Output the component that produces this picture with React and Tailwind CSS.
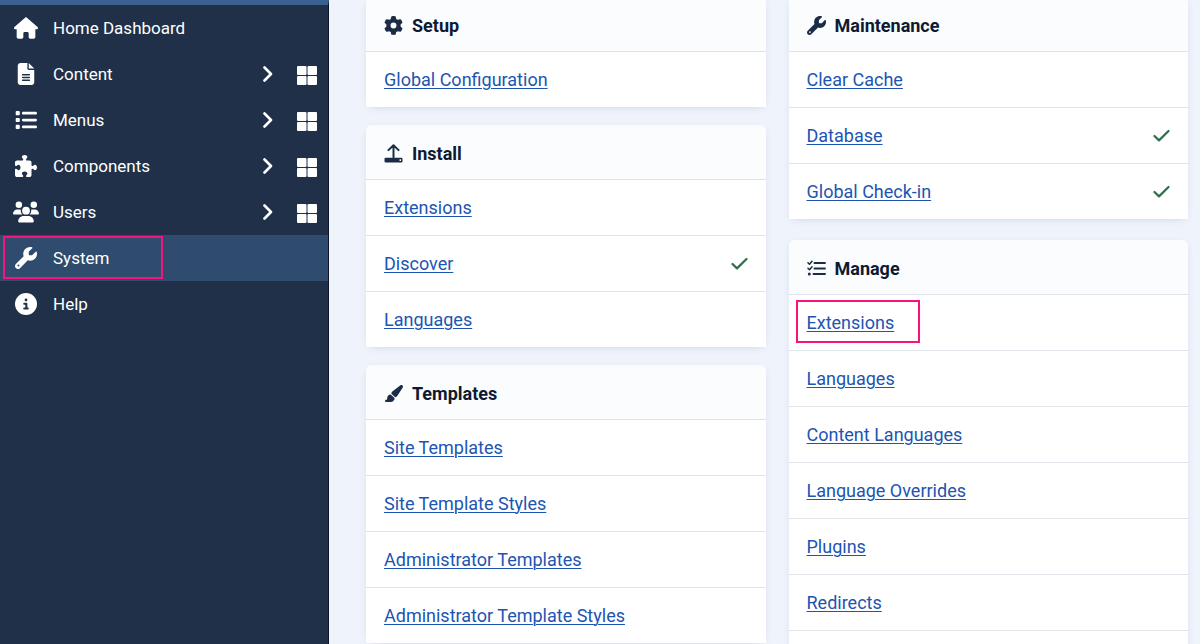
// src/App.jsx
// System dashboard: sidebar menu and link panels

import {
  FaHouse,
  FaFileLines,
  FaList,
  FaPuzzlePiece,
  FaUsers,
  FaWrench,
  FaCircleInfo,
  FaGear,
  FaPaintbrush,
} from 'react-icons/fa6';

const UploadIcon = ({ className }) => (
  <svg viewBox="0 0 18 18" className={className} fill="none" stroke="currentColor" aria-hidden="true">
    <path d="M9 12.5V1.6M4.2 5.8 9 1.2l4.8 4.6" strokeWidth="1.9" strokeLinecap="round" strokeLinejoin="round" />
    <path
      d="M1.5 13h15a1 1 0 0 1 1 1v2.6a1 1 0 0 1-1 1h-15a1 1 0 0 1-1-1V14a1 1 0 0 1 1-1Zm13.2 1.5v1.7h1.4v-1.7Z"
      fill="currentColor"
      fillRule="evenodd"
      stroke="none"
    />
  </svg>
);

const ChecklistIcon = ({ className }) => (
  <svg viewBox="0 0 19 19" className={className} fill="none" stroke="currentColor" aria-hidden="true">
    <path d="M7.5 4H18M7.5 9.5H18M6.5 15H18" strokeWidth="1.9" strokeLinecap="round" />
    <path d="m1 3.8 1.5 1.5L5 2.3M1 9.3l1.5 1.5L5 7.8" strokeWidth="1.5" strokeLinecap="round" strokeLinejoin="round" />
    <circle cx="2.3" cy="15" r="1.5" fill="currentColor" stroke="none" />
  </svg>
);

const GridIcon = () => (
  <svg viewBox="0 0 20 19" className="h-[19px] w-5" fill="currentColor" aria-hidden="true">
    <rect width="9.5" height="9" rx="1" />
    <rect x="10.5" width="9.5" height="9" rx="1" />
    <rect y="10" width="9.5" height="9" rx="1" />
    <rect x="10.5" y="10" width="9.5" height="9" rx="1" />
  </svg>
);

const CheckIcon = () => (
  <svg viewBox="0 0 18 14" className="h-[14px] w-[18px] shrink-0" fill="none" stroke="#2f6f4a" role="img" aria-label="Up to date">
    <path d="M2.5 7 7 11.4 16.5 2" strokeWidth="2.2" strokeLinecap="round" strokeLinejoin="round" />
  </svg>
);

const menu = [
  { label: 'Home Dashboard', icon: FaHouse, size: 'size-6' },
  { label: 'Content', icon: FaFileLines, size: 'size-[22px]', parent: true },
  { label: 'Menus', icon: FaList, size: 'size-[22px]', parent: true },
  { label: 'Components', icon: FaPuzzlePiece, size: 'size-[22px]', parent: true },
  { label: 'Users', icon: FaUsers, size: 'size-[26px]', parent: true },
  { label: 'System', icon: FaWrench, size: 'size-[22px]', active: true },
  { label: 'Help', icon: FaCircleInfo, size: 'size-[22px]' },
];

const leftPanels = [
  { title: 'Setup', icon: FaGear, links: [{ label: 'Global Configuration' }] },
  {
    title: 'Install',
    icon: UploadIcon,
    links: [{ label: 'Extensions' }, { label: 'Discover', ok: true }, { label: 'Languages' }],
  },
  {
    title: 'Templates',
    icon: FaPaintbrush,
    links: [
      { label: 'Site Templates' },
      { label: 'Site Template Styles' },
      { label: 'Administrator Templates' },
      { label: 'Administrator Template Styles' },
    ],
  },
];

const rightPanels = [
  {
    title: 'Maintenance',
    icon: FaWrench,
    links: [{ label: 'Clear Cache' }, { label: 'Database', ok: true }, { label: 'Global Check-in', ok: true }],
  },
  {
    title: 'Manage',
    icon: ChecklistIcon,
    more: true,
    links: [
      { label: 'Extensions', marked: true },
      { label: 'Languages' },
      { label: 'Content Languages' },
      { label: 'Language Overrides' },
      { label: 'Plugins' },
      { label: 'Redirects' },
    ],
  },
];

const MenuItem = ({ label, icon: Icon, size, parent, active }) => (
  <li className={`relative flex h-[46px] items-center pr-[11px] ${active ? 'bg-[#2f4b6d]' : ''}`}>
    <a href="#" className="flex flex-1 items-center text-white">
      <span className="mr-px flex w-[52px] justify-center">
        <Icon className={size} aria-hidden="true" />
      </span>
      {label}
    </a>
    {parent && (
      <>
        <button type="button" aria-label={`Expand ${label}`} className="mr-6 text-white">
          <svg viewBox="0 0 10 18" className="h-[18px] w-[10px]" fill="none" stroke="currentColor">
            <path d="M1.5 2.5 8 9l-6.5 6.5" strokeWidth="2.6" strokeLinecap="round" strokeLinejoin="round" />
          </svg>
        </button>
        <a href="#" aria-label={`${label} dashboard`} className="pt-[3px] text-white">
          <GridIcon />
        </a>
      </>
    )}
    {active && <span className="absolute top-px left-[3px] h-[43px] w-40 border-2 border-[#f8127d]" />}
  </li>
);

const Panel = ({ title, icon: Icon, links, more }) => (
  <section className="rounded-t-md bg-white shadow-[0_2px_10px_-4px_rgba(30,60,120,0.25)]">
    <h2 className="flex h-[55px] items-center gap-[9px] rounded-t-md border-b border-[#dfe3ea] bg-[#fbfcfe] px-[18px] pt-[3px] font-bold text-[#0e1a33]">
      <Icon className="size-[19px] text-[#1b2c47]" aria-hidden="true" />
      {title}
    </h2>
    <ul>
      {links.map(({ label, ok, marked }, i) => (
        <li
          key={label}
          className={`relative flex items-center justify-between px-[18px] ${
            i < links.length - 1 || more ? 'h-14 border-b border-[#dfe3ea]' : 'h-[55px]'
          }`}
        >
          <a href="#" className="text-[#1c55b2] underline decoration-1 underline-offset-2">
            {label}
          </a>
          {ok && <CheckIcon />}
          {marked && <span className="absolute top-[5px] left-[7px] h-[43px] w-[124px] border-2 border-[#f8127d]" />}
        </li>
      ))}
      {more && <li className="h-14" />}
    </ul>
  </section>
);

export default function App() {
  return (
    <div className="flex h-screen overflow-hidden bg-[#eff3fb] font-['Roboto',sans-serif] text-lg">
      <nav className="w-[329px] shrink-0 border-t-[5px] border-r border-t-[#3b6190] border-r-[#0c1626] bg-[#1f3048] text-[17px]">
        <ul>
          {menu.map((item) => (
            <MenuItem key={item.label} {...item} />
          ))}
        </ul>
      </nav>
      <main className="-mt-[3px] grid flex-1 grid-cols-2 items-start gap-x-[23px] pr-3 pl-[37px]">
        <div className="flex flex-col gap-[18px]">
          {leftPanels.map((panel) => (
            <Panel key={panel.title} {...panel} />
          ))}
        </div>
        <div className="flex flex-col gap-[21px]">
          {rightPanels.map((panel) => (
            <Panel key={panel.title} {...panel} />
          ))}
        </div>
      </main>
    </div>
  );
}
